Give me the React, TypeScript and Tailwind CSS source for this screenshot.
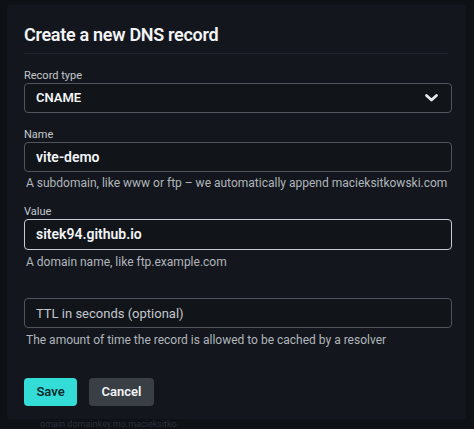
import React from "react";

const Label = ({ children }: { children: React.ReactNode }) => (
  <div className="text-[11px] leading-[13px] text-[#c3c7cc] mb-[1px]">{children}</div>
);

const Help = ({ children, className }: { children: React.ReactNode; className?: string }) => (
  <div className={"text-[12px] leading-[16px] text-[#b1b5bb] pl-[2px] whitespace-nowrap " + (className ?? "mt-[3px]")}>
    {children}
  </div>
);

const App = () => {
  const [name, setName] = React.useState("vite-demo");
  const [value, setValue] = React.useState("sitek94.github.io");
  const [ttl, setTtl] = React.useState("");

  return (
    <div
      className="w-[474px] h-[429px] overflow-hidden bg-[#0e1116] flex flex-col"
      style={{ fontFamily: "Roboto, 'Noto Sans', sans-serif" }}
    >
      <div className="mt-[5px] ml-[7px] w-[459px] h-[414px] shrink-0 bg-[#13171d] rounded-[4px] pl-[17px] pr-[14px] pt-[18px]">
        <h2 className="text-[18px] leading-[24px] font-semibold tracking-[-0.3px] text-[#f3f4f6] pb-[6px] border-b border-[#1e242b] mr-[4px]">
          Create a new DNS record
        </h2>

        <div className="mt-[15px]">
          <Label>Record type</Label>
          <div className="h-[30px] border border-[#50555d] rounded-[4px] bg-[#11151a] flex items-center justify-between pl-[11px] pr-[12px]">
            <span className="text-[13px] font-semibold text-[#f3f4f6]">CNAME</span>
            <svg width="15" height="10" viewBox="0 0 15 10" fill="none">
              <path d="M2.5 2.5 L7.5 7 L12.5 2.5" stroke="#e5e7eb" strokeWidth="2.8" strokeLinecap="round" strokeLinejoin="round" />
            </svg>
          </div>
        </div>

        <div className="mt-[15px]">
          <Label>Name</Label>
          <input
            value={name}
            onChange={(e) => setName(e.target.value)}
            className="w-full h-[30px] border border-[#50555d] rounded-[4px] bg-[#11151a] pl-[11px] text-[14px] font-semibold text-[#f3f4f6] outline-none"
          />
          <Help>A subdomain, like www or ftp – we automatically append macieksitkowski.com</Help>
        </div>

        <div className="mt-[14px]">
          <Label>Value</Label>
          <div className="w-full h-[31px] border border-[#c9ccd1] rounded-[4px] bg-[#11151a] pl-[11px] flex items-center">
            <input
              value={value}
              onChange={(e) => setValue(e.target.value)}
              className="w-full text-[14px] font-semibold text-[#f3f4f6] outline-none bg-transparent"
            />
          </div>
          <Help className="mt-[4px]">A domain name, like ftp.example.com</Help>
        </div>

        <div className="mt-[28px]">
          <input
            value={ttl}
            onChange={(e) => setTtl(e.target.value)}
            placeholder="TTL in seconds (optional)"
            className="w-full h-[30px] border border-[#50555d] rounded-[4px] bg-[#11151a] pl-[11px] text-[13px] text-[#f3f4f6] placeholder:text-[#c3c7cc] outline-none"
          />
          <Help className="mt-[4px]">The amount of time the record is allowed to be cached by a resolver</Help>
        </div>

        <div className="flex gap-[12px] mt-[30px]">
          <button className="h-[28px] w-[53px] rounded-[4px] bg-[#33dcd6] text-[#0c2b2e] text-[13px] font-semibold">
            Save
          </button>
          <button className="h-[28px] w-[65px] rounded-[4px] bg-[#3a3e45] text-[#f3f4f6] text-[13px] font-semibold">
            Cancel
          </button>
        </div>
      </div>
      <div className="pl-[40px] pt-[1px] text-[9px] leading-[9px] text-[#2a3038] whitespace-nowrap">
        omain domainkey.mo.macieksitko
      </div>
    </div>
  );
};

export default App;
